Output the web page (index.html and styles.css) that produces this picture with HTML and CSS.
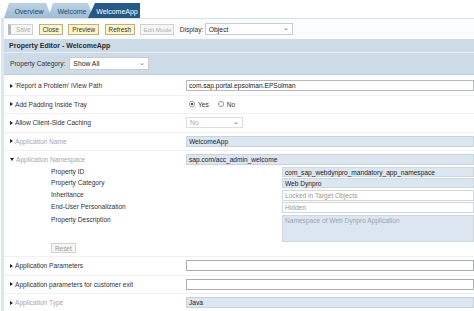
FILE: index.html
```html
<!DOCTYPE html>
<html>
<head>
<meta charset="utf-8">
<link rel="stylesheet" href="styles.css">
</head>
<body>
<div class="tabs">
  <div class="tab tab-light">Overview</div>
  <div class="tab tab-light">Welcome</div>
  <div class="tab tab-active">WelcomeApp</div>
</div>
<div class="frame">
  <div class="toolbar">
    <span class="btn btn-dis btn-save">Save</span>
    <span class="btn">Close</span>
    <span class="btn">Preview</span>
    <span class="btn">Refresh</span>
    <span class="btn btn-dis btn-edit">Edit Mode</span>
    <span class="disp-label">Display:</span>
    <span class="select select-display">Object<span class="chev">&#8964;</span></span>
  </div>
  <div class="editor">
    <div class="ed-title">Property Editor - WelcomeApp</div>
    <div class="ed-cat">
      <span>Property Category:</span>
      <span class="select select-cat">Show All<span class="chev">&#8964;</span></span>
    </div>
    <div class="props">
      <div class="row">
        <div class="lbl"><span class="tri"></span>'Report a Problem' iView Path</div>
        <div class="val"><span class="inp">com.sap.portal.epsolman.EPSolman</span></div>
      </div>
      <div class="row">
        <div class="lbl"><span class="tri"></span>Add Padding Inside Tray</div>
        <div class="val radios"><span class="radio on"></span>Yes<span class="radio no"></span>No</div>
      </div>
      <div class="row">
        <div class="lbl"><span class="tri"></span>Allow Client-Side Caching</div>
        <div class="val"><span class="select select-dis">No<span class="chev">&#8964;</span></span></div>
      </div>
      <div class="row">
        <div class="lbl dim"><span class="tri"></span>Application Name</div>
        <div class="val"><span class="inp inp-ro">WelcomeApp</span></div>
      </div>
      <div class="row row-open">
        <div class="lbl dim"><span class="tri tri-down"></span>Application Namespace</div>
        <div class="val"><span class="inp inp-ro">sap.com/acc_admin_welcome</span></div>
      </div>
      <div class="sub">
        <div class="sub-lbl">Property ID</div>
        <div class="sub-val ro">com_sap_webdynpro_mandatory_app_namespace</div>
        <div class="sub-lbl">Property Category</div>
        <div class="sub-val ro">Web Dynpro</div>
        <div class="sub-lbl gap2">Inheritance</div>
        <div class="sub-val wh gap2">Locked in Target Objects</div>
        <div class="sub-lbl">End-User Personalization</div>
        <div class="sub-val wh">Hidden</div>
        <div class="sub-lbl gap2">Property Description</div>
        <div class="sub-val ro area gap2">Namespace of Web Dynpro Application</div>
      </div>
      <div class="reset-row"><span class="btn btn-dis btn-reset">Reset</span></div>
      <div class="row">
        <div class="lbl"><span class="tri"></span>Application Parameters</div>
        <div class="val"><span class="inp inp-empty"></span></div>
      </div>
      <div class="row">
        <div class="lbl"><span class="tri"></span>Application parameters for customer exit</div>
        <div class="val"><span class="inp inp-empty"></span></div>
      </div>
      <div class="row">
        <div class="lbl dim"><span class="tri"></span>Application Type</div>
        <div class="val"><span class="inp inp-ro">Java</span></div>
      </div>
    </div>
  </div>
</div>
</body>
</html>
```
FILE: styles.css
```css
* { box-sizing: border-box; }
body {
  margin: 0;
  font-family: "Liberation Sans", Arial, sans-serif;
  font-size: 6.6px;
  color: #222;
  background: #fff;
  width: 474px;
  height: 311px;
  overflow: hidden;
}
.tabs {
  display: flex;
  height: 18px;
  padding: 3px 0 0 4px;
  align-items: stretch;
}
.tab {
  display: flex;
  align-items: center;
  justify-content: center;
  font-size: 7px;
  margin-right: -4px;
}
.tab-light {
  background: linear-gradient(#bcd2e4, #9fbdd6);
  color: #2a4660;
  clip-path: polygon(5px 0, calc(100% - 6px) 0, 100% 100%, 0 100%);
  padding: 1px 6px 0 8px;
}
.tab-light:first-child { width: 48px; }
.tab-light:nth-child(2) { width: 46px; }
.tab-active {
  background: #26598a;
  color: #fff;
  width: 52px;
  margin-left: -2px;
  clip-path: polygon(7px 0, 100% 0, 100% 100%, 0 100%);
  padding: 1px 4px 0 10px;
}
.frame {
  border-left: 3px solid #dce6ef;
  border-top: 1px solid #d6e2ec;
  margin-left: 1px;
  height: 293px;
  background: #fff;
}
.toolbar {
  display: flex;
  align-items: center;
  gap: 5.5px;
  height: 20px;
  padding-left: 4px;
  background: #fbfcfd;
}
.btn {
  display: inline-flex;
  align-items: center;
  height: 11px;
  padding: 0 3px;
  background: #fdf4c7;
  border: 1px solid #bfb27a;
  color: #333;
  font-size: 6.4px;
}
.btn-dis {
  background: #f6f6f4;
  border-color: #d2d2d0;
  color: #b0b0b0;
}
.btn-save { border-left: 3px solid #b9b9b9; width: 25px; padding-left: 5px; }
.btn-edit { padding: 0 2px; font-size: 6.2px; }
.disp-label { color: #333; font-size: 6.6px; }
.select {
  display: inline-flex;
  align-items: center;
  justify-content: space-between;
  height: 12px;
  padding: 0 3px;
  border: 1px solid #c8cdd2;
  background: #fff;
  color: #222;
  font-size: 6.8px;
}
.chev { font-size: 7px; color: #666; line-height: 1; margin-top: -3px; }
.select-display { width: 88px; margin-left: -4px; }
.ed-title {
  background: #cddbe7;
  height: 14px;
  border-bottom: 1px solid #e6edf3;
  display: flex;
  align-items: center;
  padding-left: 5px;
  font-weight: bold;
  font-size: 7px;
  color: #2b2b2b;
}
.ed-cat {
  background: #cddbe7;
  height: 22px;
  display: flex;
  align-items: center;
  gap: 4px;
  padding-left: 6px;
  color: #333;
  border-bottom: 1px solid #bccddd;
}
.select-cat { width: 80px; height: 13px; }
.props { padding-top: 2px; }
.row {
  display: grid;
  grid-template-columns: 182px 1fr;
  height: 18.5px;
  align-items: center;
  border-bottom: 1px solid #eef0f2;
}
.row-open { border-bottom: none; height: 16px; }
.lbl {
  display: flex;
  align-items: center;
  padding-left: 6px;
  color: #333;
  white-space: nowrap;
}
.lbl.dim { color: #a3a9b0; }
.tri {
  width: 0; height: 0;
  border-top: 2px solid transparent;
  border-bottom: 2px solid transparent;
  border-left: 3px solid #222;
  margin-right: 2px;
}
.tri-down {
  border-left: 2px solid transparent;
  border-right: 2px solid transparent;
  border-top: 3px solid #222;
  border-bottom: none;
  margin-right: 2px;
}
.val { display: flex; align-items: center; }
.inp {
  display: flex;
  align-items: center;
  height: 11px;
  width: 100%;
  padding-left: 2px;
  border: 1px solid #b5b9bd;
  background: #fff;
  color: #222;
}
.inp-ro { background: #dce6f1; border-color: #c9d3dd; }
.inp-empty { border-color: #a9adb1; }
.radios { gap: 0; color: #333; }
.radio {
  width: 6px; height: 6px;
  border-radius: 50%;
  border: 1px solid #999;
  background: #fff;
  margin: 0 3px 0 3px;
  position: relative;
}
.radio.on::after {
  content: "";
  position: absolute;
  left: 1px; top: 1px;
  width: 2px; height: 2px;
  border-radius: 50%;
  background: #222;
}
.radio.no { margin-left: 9px; }
.select-dis {
  width: 57px; height: 11px;
  color: #aaa;
  border-color: #ddd;
}
.sub {
  display: grid;
  grid-template-columns: 235px 1fr;
  margin-left: 43px;
  row-gap: 1px;
}
.sub-lbl {
  display: flex;
  align-items: flex-start;
  color: #333;
  padding-left: 4px;
  padding-top: 1px;
}
.sub-val {
  display: flex;
  align-items: center;
  padding-left: 2px;
  height: 10px;
  border: 1px solid #cfd7df;
}
.gap2 { margin-top: 1px; }
.sub-val.ro { background: #dce6f1; color: #222; }
.sub-val.wh { background: #fff; color: #999; height: 11px; }
.sub-val.area {
  height: 27px;
  align-items: flex-start;
  padding-top: 1px;
  color: #9aa6b2;
}
.reset-row {
  height: 15px;
  padding-left: 47px;
  padding-top: 1px;
  display: flex;
  align-items: flex-start;
  border-bottom: 1px solid #eef0f2;
}
.btn-reset { height: 10px; font-size: 6.4px; color: #9a9a9a; padding: 0 3px; }
```
